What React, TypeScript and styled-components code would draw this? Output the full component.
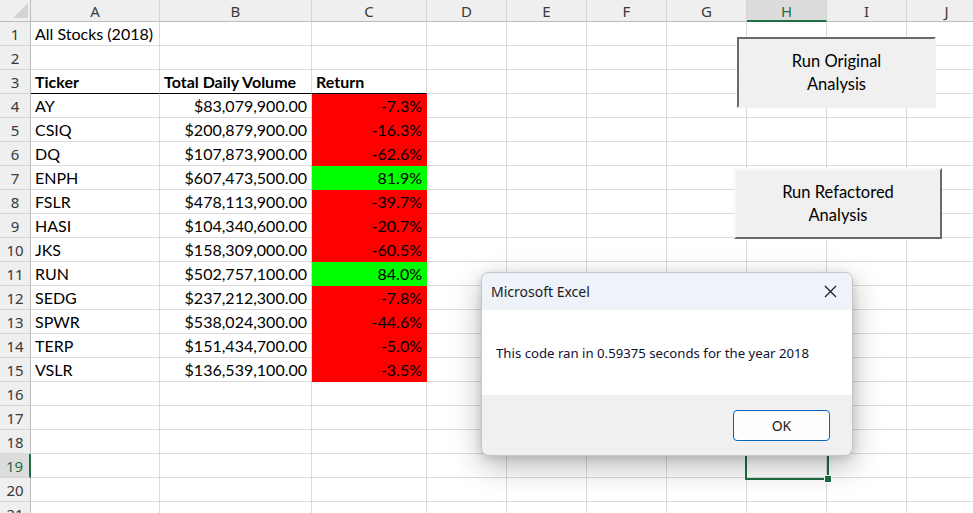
import styled, {createGlobalStyle} from 'styled-components';

const GREEN = '#1e6e42';
const GRID = '#dadada';

const columns = [
  {key: 'A', width: 129},
  {key: 'B', width: 152},
  {key: 'C', width: 115},
  {key: 'D', width: 80},
  {key: 'E', width: 80},
  {key: 'F', width: 80},
  {key: 'G', width: 80},
  {key: 'H', width: 80},
  {key: 'I', width: 80},
  {key: 'J', width: 80},
];

const stocks = [
  ['AY', '$83,079,900.00', '-7.3%'],
  ['CSIQ', '$200,879,900.00', '-16.3%'],
  ['DQ', '$107,873,900.00', '-62.6%'],
  ['ENPH', '$607,473,500.00', '81.9%'],
  ['FSLR', '$478,113,900.00', '-39.7%'],
  ['HASI', '$104,340,600.00', '-20.7%'],
  ['JKS', '$158,309,000.00', '-60.5%'],
  ['RUN', '$502,757,100.00', '84.0%'],
  ['SEDG', '$237,212,300.00', '-7.8%'],
  ['SPWR', '$538,024,300.00', '-44.6%'],
  ['TERP', '$151,434,700.00', '-5.0%'],
  ['VSLR', '$136,539,100.00', '-3.5%'],
];

type CellData = {text?: string; align?: 'left' | 'right'; bold?: boolean; fill?: string; underline?: boolean};

function rowCells(row: number): CellData[] {
  const cells: CellData[] = columns.map(() => ({}));
  if (row === 1) cells[0] = {text: 'All Stocks (2018)'};
  if (row === 3) {
    cells[0] = {text: 'Ticker', bold: true, underline: true};
    cells[1] = {text: 'Total Daily Volume', bold: true, underline: true};
    cells[2] = {text: 'Return', bold: true, underline: true};
  }
  const s = stocks[row - 4];
  if (s) {
    const positive = !s[2].startsWith('-');
    cells[0] = {text: s[0]};
    cells[1] = {text: s[1], align: 'right'};
    cells[2] = {text: s[2], align: 'right', fill: positive ? '#00ff00' : '#ff0000'};
  }
  return cells;
}

function App() {
  const rows = Array.from({length: 21}, (_, i) => i + 1);
  return (
    <>
      <GlobalStyle />
      <Workbook>
        <Sheet>
          <Corner>
            <svg width="31" height="22" viewBox="0 0 31 22">
              <polygon points="13,18 28,18 28,3" fill="#d4d4d4" />
            </svg>
          </Corner>
          {columns.map(c => (
            <ColHeader key={c.key} $active={c.key === 'H'}>{c.key}</ColHeader>
          ))}
          {rows.map(r => (
            <Row key={r} row={r} />
          ))}
        </Sheet>

        <SheetButton $pressed style={{left: 737, top: 37, width: 199, height: 71}}>
          Run Original<br />Analysis
        </SheetButton>
        <SheetButton style={{left: 734, top: 168, width: 208, height: 71}}>
          Run Refactored<br />Analysis
        </SheetButton>

        <Selection>
          <Handle />
        </Selection>

        <Dialog>
          <TitleBar>
            <Title>Microsoft Excel</Title>
            <CloseButton aria-label="Close">
              <svg width="13" height="13" viewBox="0 0 13 13">
                <path d="M1 1 L12 12 M12 1 L1 12" stroke="#1a1a1a" strokeWidth="1.2" />
              </svg>
            </CloseButton>
          </TitleBar>
          <Message>This code ran in 0.59375 seconds for the year 2018</Message>
          <Footer>
            <OkButton>OK</OkButton>
          </Footer>
        </Dialog>
      </Workbook>
    </>
  );
}

function Row({row}: {row: number}) {
  const cells = rowCells(row);
  return (
    <>
      <RowHeader $active={row === 19}>{row}</RowHeader>
      {cells.map((c, i) => (
        <Cell
          key={i}
          $align={c.align || 'left'}
          $bold={!!c.bold}
          $fill={c.fill}
          $underline={!!c.underline}
        >
          {c.text}
        </Cell>
      ))}
    </>
  );
}

const GlobalStyle = createGlobalStyle`
  html, body {
    margin: 0;
    padding: 0;
    background: #fff;
    overflow: hidden;
  }
`

const Workbook = styled.div`
  position: relative;
  width: 973px;
  height: 513px;
  overflow: hidden;
  background: #fff;
`

const Sheet = styled.div`
  display: grid;
  grid-template-columns: 31px ${columns.map(c => `${c.width}px`).join(' ')};
  grid-template-rows: 22px;
  grid-auto-rows: 24px;
  font-family: Lato, "Liberation Sans", sans-serif;
  font-size: 16px;
  color: #000;
`

const Corner = styled.div`
  background: #efefef;
  border-right: 1px solid #bdbdbd;
  border-bottom: 1px solid #bdbdbd;
  box-sizing: border-box;
  svg { display: block; }
`

const ColHeader = styled.div<{$active: boolean}>`
  box-sizing: border-box;
  display: flex;
  align-items: center;
  justify-content: center;
  background: ${p => (p.$active ? '#dcdcdc' : '#efefef')};
  border-right: 1px solid #d4d4d4;
  border-bottom: ${p => (p.$active ? `2px solid ${GREEN}` : '1px solid #bdbdbd')};
  color: ${p => (p.$active ? GREEN : '#3a3a3a')};
  font-family: "Noto Sans", sans-serif;
  font-size: 15px;
  padding-top: ${p => (p.$active ? '1px' : '0')};
`

const RowHeader = styled.div<{$active: boolean}>`
  box-sizing: border-box;
  display: flex;
  align-items: center;
  justify-content: center;
  background: ${p => (p.$active ? '#dcdcdc' : '#efefef')};
  border-right: ${p => (p.$active ? `2px solid ${GREEN}` : '1px solid #bdbdbd')};
  border-bottom: 1px solid #d4d4d4;
  color: ${p => (p.$active ? GREEN : '#3a3a3a')};
  font-family: "Noto Sans", sans-serif;
  font-size: 15px;
`

const Cell = styled.div<{$align: string; $bold: boolean; $fill?: string; $underline: boolean}>`
  box-sizing: border-box;
  padding: 0 4px;
  line-height: 24px;
  white-space: nowrap;
  overflow: visible;
  text-align: ${p => p.$align};
  font-weight: ${p => (p.$bold ? 700 : 400)};
  background: ${p => p.$fill || 'transparent'};
  border-right: 1px solid ${p => p.$fill || GRID};
  border-bottom: 1px solid ${p => (p.$underline ? '#000' : p.$fill || GRID)};
  position: relative;
  z-index: ${p => (p.$align === 'left' ? 1 : 0)};
`

const SheetButton = styled.div<{$pressed?: boolean}>`
  position: absolute;
  box-sizing: border-box;
  display: flex;
  align-items: center;
  justify-content: center;
  text-align: center;
  background: #f0f0f0;
  border-top: 2px solid ${p => (p.$pressed ? '#6a6a6a' : '#f8f8f8')};
  border-left: 2px solid ${p => (p.$pressed ? '#6a6a6a' : '#f8f8f8')};
  border-right: 2px solid ${p => (p.$pressed ? '#f0f0f0' : '#6a6a6a')};
  border-bottom: 2px solid ${p => (p.$pressed ? '#f0f0f0' : '#6a6a6a')};
  font-family: Lato, "Liberation Sans", sans-serif;
  font-size: 16.5px;
  line-height: 23px;
  color: #000;
  z-index: 2;
`

const Selection = styled.div`
  position: absolute;
  left: 745px;
  top: 452px;
  width: 84px;
  height: 28px;
  box-sizing: border-box;
  border: 2px solid ${GREEN};
  z-index: 2;
`

const Handle = styled.div`
  position: absolute;
  right: -5px;
  bottom: -5px;
  width: 6px;
  height: 6px;
  background: ${GREEN};
  border: 1px solid #fff;
`

const Dialog = styled.div`
  position: absolute;
  left: 481px;
  top: 272px;
  width: 372px;
  height: 184px;
  box-sizing: border-box;
  display: flex;
  flex-direction: column;
  border: 1px solid #c6c6c6;
  border-radius: 8px;
  overflow: hidden;
  background: #f0f0f0;
  box-shadow: 0 10px 30px rgba(0, 0, 0, 0.28), 0 2px 8px rgba(0, 0, 0, 0.12);
  font-family: "Noto Sans", sans-serif;
  color: #1a1a1a;
  z-index: 3;
`

const TitleBar = styled.div`
  height: 37px;
  display: flex;
  align-items: center;
  justify-content: space-between;
  padding: 0 15px 0 9px;
  background: #eef3f9;
`

const Title = styled.span`
  font-size: 14px;
`

const CloseButton = styled.span`
  display: flex;
  width: 13px;
  height: 13px;
`

const Message = styled.div`
  height: 85px;
  display: flex;
  align-items: center;
  padding-left: 14px;
  background: #fff;
  font-size: 13.2px;
  color: #101030;
`

const Footer = styled.div`
  flex: 1;
  display: flex;
  align-items: center;
  justify-content: flex-end;
  padding-right: 22px;
`

const OkButton = styled.div`
  width: 97px;
  height: 31px;
  box-sizing: border-box;
  display: flex;
  align-items: center;
  justify-content: center;
  border: 1px solid #0067c0;
  border-radius: 4px;
  background: #fdfdfd;
  font-size: 14px;
  color: #1a1a1a;
`

export default App;
